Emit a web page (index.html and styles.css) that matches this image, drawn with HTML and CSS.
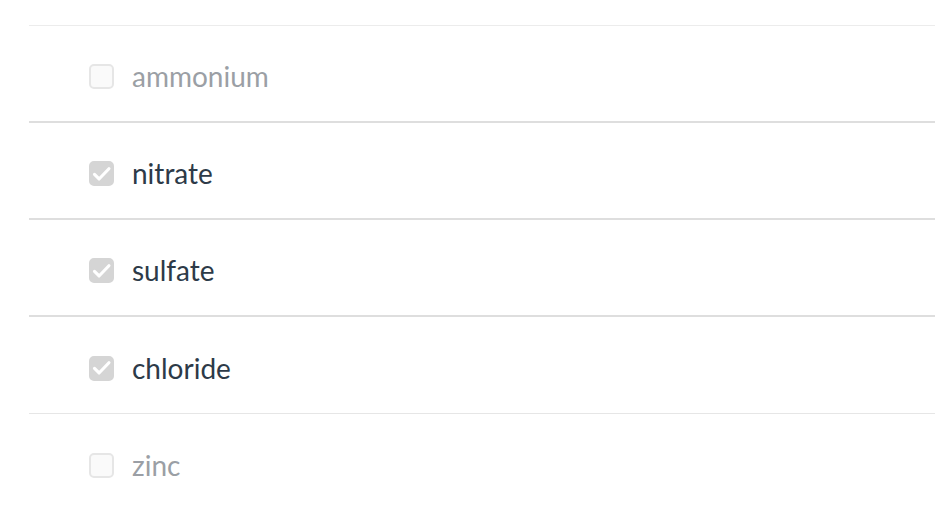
FILE: index.html
```html
<!DOCTYPE html>
<html lang="en">
<head>
  <meta charset="UTF-8" />
  <title>ions</title>
  <link rel="stylesheet" href="styles.css">
</head>
<body>
  <ul class="option-list">
    <li class="option">
      <span class="box"></span>
      <span class="label">ammonium</span>
    </li>
    <li class="option checked">
      <span class="box">
        <svg viewBox="0 0 24 24" width="22" height="22"><path d="M4 12.5l5.2 5.2L20.5 6" fill="none" stroke="#fff" stroke-width="3.6" stroke-linecap="round" stroke-linejoin="round"/></svg>
      </span>
      <span class="label">nitrate</span>
    </li>
    <li class="option checked">
      <span class="box">
        <svg viewBox="0 0 24 24" width="22" height="22"><path d="M4 12.5l5.2 5.2L20.5 6" fill="none" stroke="#fff" stroke-width="3.6" stroke-linecap="round" stroke-linejoin="round"/></svg>
      </span>
      <span class="label">sulfate</span>
    </li>
    <li class="option checked">
      <span class="box">
        <svg viewBox="0 0 24 24" width="22" height="22"><path d="M4 12.5l5.2 5.2L20.5 6" fill="none" stroke="#fff" stroke-width="3.6" stroke-linecap="round" stroke-linejoin="round"/></svg>
      </span>
      <span class="label">chloride</span>
    </li>
    <li class="option last">
      <span class="box"></span>
      <span class="label">zinc</span>
    </li>
  </ul>
</body>
</html>
```

FILE: styles.css
```css
body {
  margin: 0;
  background: #fff;
  font-family: Lato, "Noto Sans", sans-serif;
}

.option-list {
  list-style: none;
  margin: 25px 17px 0 29px;
  padding: 0;
  border-top: 1px solid #ececec;
}

.option {
  display: flex;
  align-items: center;
  gap: 18px;
  height: 95px;
  padding: 0 0 0 60px;
  border-bottom: 2px solid #dedede;
  color: #9b9fa5;
  font-size: 28px;
}

.option.last {
  border-bottom: none;
  padding-top: 1px;
}

.option:nth-child(4) {
  border-bottom: 1px solid #e6e6e6;
  height: 96px;
}

.label {
  margin-top: 5px;
}

.box {
  width: 21px;
  height: 21px;
  border: 2px solid #e6e6e6;
  border-radius: 5px;
  background: #fafafa;
  display: flex;
  align-items: center;
  justify-content: center;
  margin-top: 6px;
}

.checked {
  color: #2d3a48;
}

.checked .box {
  background: #d5d5d5;
  border-color: #d5d5d5;
}
```
